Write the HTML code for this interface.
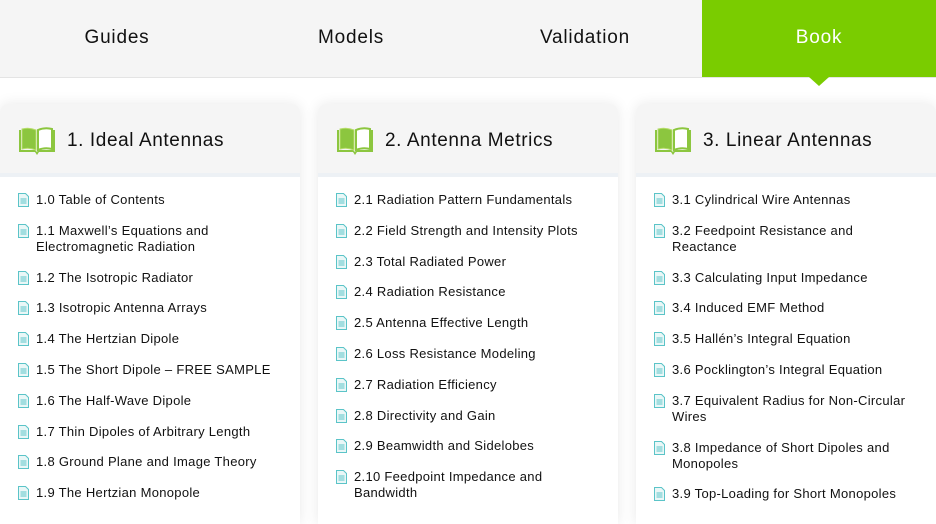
<!DOCTYPE html>
<html><head><meta charset="utf-8"><style>
*{margin:0;padding:0;box-sizing:border-box}
body{width:936px;height:512px;overflow:hidden;background:#fff;font-family:"Liberation Sans",sans-serif;color:#111;position:relative}
.nav{position:absolute;top:0;left:0;width:936px;height:78px;background:#f5f5f5;border-bottom:1px solid #e4e4e4}
.nav div{position:absolute;top:0;height:77px;width:234px;text-align:center;line-height:75px;font-size:19px;color:#111;letter-spacing:.8px}
.nav .act{background:#7acc00;color:#fff;left:702px}
.tri{position:absolute;left:809px;top:77px;width:0;height:0;border-left:10px solid transparent;border-right:10px solid transparent;border-top:9px solid #7acc00}
.card{position:absolute;top:104px;width:300px;height:420px;background:#fff;border-radius:8px 8px 0 0;box-shadow:0 0 14px rgba(0,0,0,.09);overflow:hidden}
.hd{height:73px;background:#f5f5f5;border-bottom:4px solid #edf1f5;position:relative}
.hd svg{position:absolute;left:17px;top:22px}
.hd span{position:absolute;left:67px;top:26px;font-size:19px;color:#111;letter-spacing:.6px}
ul{list-style:none;padding:15px 0 0 18px}
li{position:relative;padding-left:18px;font-size:13px;line-height:16px;margin-bottom:14.8px;color:#111;width:276px;letter-spacing:.3px}
li svg{position:absolute;left:0;top:1px}
</style></head><body>
<div class="nav"><div style="left:0">Guides</div><div style="left:234px">Models</div><div style="left:468px">Validation</div><div class="act">Book</div></div>
<div class="tri"></div>

<svg width="0" height="0" style="position:absolute"><defs>
<symbol id="bk" viewBox="0 0 40 30"><path d="M2 4 L2 26 L18 26 L20 29 L22 26 L38 26 L38 4 L36 4 L36 24 L22 24 L20 26 L18 24 L4 24 L4 4Z" fill="#8cc63f"/><path d="M5 3 Q12 1 19 4 L19 24 Q12 21 5 23Z" fill="#8cc63f" stroke="#b6dd6a"/><path d="M21 4 Q28 1 35 3 L35 23 Q28 21 21 24Z" fill="#fff" stroke="#8cc63f" stroke-width="2"/></symbol>
<symbol id="dc" viewBox="0 0 11 14"><path d="M.5 .5 H7.5 L10.5 3.5 V13.5 H.5Z" fill="#eaf7f7" stroke="#5bc4c8"/><path d="M2.5 6H8.5M2.5 8H8.5M2.5 10H8.5" stroke="#5bc4c8"/></symbol>
</defs></svg>

<div class="card" style="left:0">
<div class="hd"><svg width="40" height="30"><use href="#bk"/></svg><span>1. Ideal Antennas</span></div>
<ul>
<li><svg width="11" height="14"><use href="#dc"/></svg>1.0 Table of Contents</li>
<li><svg width="11" height="14"><use href="#dc"/></svg>1.1 Maxwell’s Equations and<br>Electromagnetic Radiation</li>
<li><svg width="11" height="14"><use href="#dc"/></svg>1.2 The Isotropic Radiator</li>
<li><svg width="11" height="14"><use href="#dc"/></svg>1.3 Isotropic Antenna Arrays</li>
<li><svg width="11" height="14"><use href="#dc"/></svg>1.4 The Hertzian Dipole</li>
<li><svg width="11" height="14"><use href="#dc"/></svg>1.5 The Short Dipole – FREE SAMPLE</li>
<li><svg width="11" height="14"><use href="#dc"/></svg>1.6 The Half-Wave Dipole</li>
<li><svg width="11" height="14"><use href="#dc"/></svg>1.7 Thin Dipoles of Arbitrary Length</li>
<li><svg width="11" height="14"><use href="#dc"/></svg>1.8 Ground Plane and Image Theory</li>
<li><svg width="11" height="14"><use href="#dc"/></svg>1.9 The Hertzian Monopole</li>
</ul></div>

<div class="card" style="left:318px">
<div class="hd"><svg width="40" height="30"><use href="#bk"/></svg><span>2. Antenna Metrics</span></div>
<ul>
<li><svg width="11" height="14"><use href="#dc"/></svg>2.1 Radiation Pattern Fundamentals</li>
<li><svg width="11" height="14"><use href="#dc"/></svg>2.2 Field Strength and Intensity Plots</li>
<li><svg width="11" height="14"><use href="#dc"/></svg>2.3 Total Radiated Power</li>
<li><svg width="11" height="14"><use href="#dc"/></svg>2.4 Radiation Resistance</li>
<li><svg width="11" height="14"><use href="#dc"/></svg>2.5 Antenna Effective Length</li>
<li><svg width="11" height="14"><use href="#dc"/></svg>2.6 Loss Resistance Modeling</li>
<li><svg width="11" height="14"><use href="#dc"/></svg>2.7 Radiation Efficiency</li>
<li><svg width="11" height="14"><use href="#dc"/></svg>2.8 Directivity and Gain</li>
<li><svg width="11" height="14"><use href="#dc"/></svg>2.9 Beamwidth and Sidelobes</li>
<li><svg width="11" height="14"><use href="#dc"/></svg>2.10 Feedpoint Impedance and<br>Bandwidth</li>
</ul></div>

<div class="card" style="left:636px">
<div class="hd"><svg width="40" height="30"><use href="#bk"/></svg><span>3. Linear Antennas</span></div>
<ul>
<li><svg width="11" height="14"><use href="#dc"/></svg>3.1 Cylindrical Wire Antennas</li>
<li><svg width="11" height="14"><use href="#dc"/></svg>3.2 Feedpoint Resistance and<br>Reactance</li>
<li><svg width="11" height="14"><use href="#dc"/></svg>3.3 Calculating Input Impedance</li>
<li><svg width="11" height="14"><use href="#dc"/></svg>3.4 Induced EMF Method</li>
<li><svg width="11" height="14"><use href="#dc"/></svg>3.5 Hallén’s Integral Equation</li>
<li><svg width="11" height="14"><use href="#dc"/></svg>3.6 Pocklington’s Integral Equation</li>
<li><svg width="11" height="14"><use href="#dc"/></svg>3.7 Equivalent Radius for Non-Circular<br>Wires</li>
<li><svg width="11" height="14"><use href="#dc"/></svg>3.8 Impedance of Short Dipoles and<br>Monopoles</li>
<li><svg width="11" height="14"><use href="#dc"/></svg>3.9 Top-Loading for Short Monopoles</li>
</ul></div>
</body></html>
